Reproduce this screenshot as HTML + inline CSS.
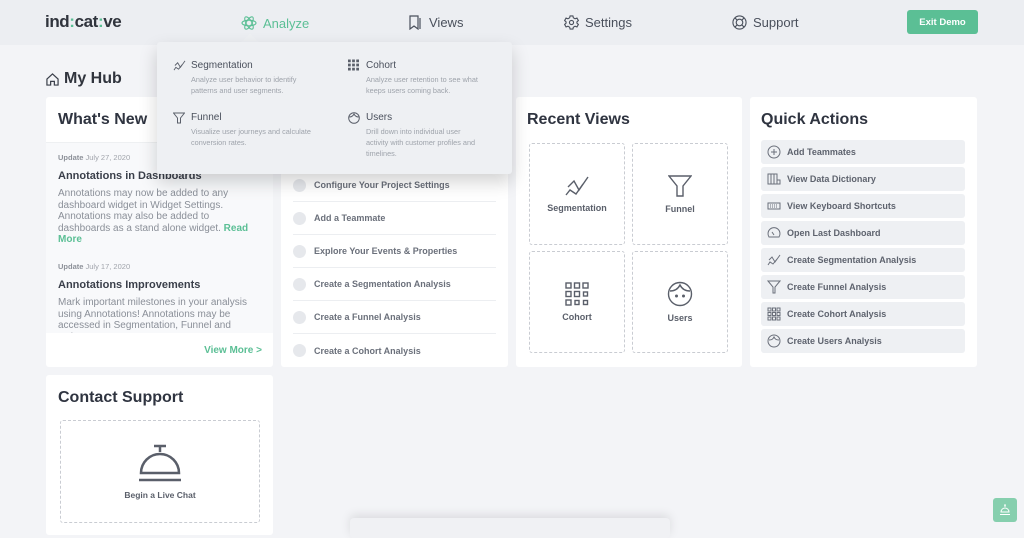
<!DOCTYPE html>
<html><head><meta charset="utf-8"><style>
*{box-sizing:border-box;margin:0;padding:0}
body{width:1024px;height:527px;overflow:hidden;background:#f3f4f7;font-family:"Liberation Sans",sans-serif;color:#3a3f4a;position:relative}
.hdr{position:absolute;left:0;top:0;width:1024px;height:45px;background:#eceef2}
.abs{position:absolute}
.nav{position:absolute;top:15px;font-size:13px;color:#4a505c;display:flex;align-items:center;gap:6px}
.card{position:absolute;background:#fff;border-radius:3px}
h2{font-size:16px;font-weight:bold;color:#2f3440}
.mid-item{position:absolute;left:12px;width:203px;height:33px;border-bottom:1px solid #eceef1;font-size:9px;font-weight:bold;color:#6b707b;display:flex;align-items:center;gap:8px}
.chk{width:13px;height:13px;border-radius:50%;background:#e6e8ec}
.tile{position:absolute;width:96px;height:102px;border:1px dashed #c9ccd2;border-radius:3px;display:flex;flex-direction:column;align-items:center;justify-content:center;font-size:9px;color:#5a5f6a;font-weight:bold;gap:6px}
.qa{position:absolute;left:11px;width:204px;height:24px;background:#eef0f3;border-radius:3px;font-size:9px;font-weight:bold;color:#5e636e;display:flex;align-items:center;padding-left:6px;gap:6px}
.qa svg{width:14px;height:14px}
.dd{position:absolute;left:157px;top:42px;width:355px;height:132px;background:#eef0f3;border-radius:3px;box-shadow:0 8px 18px rgba(0,0,0,.18)}
.dd .t{position:absolute;font-size:10px;color:#4a505c}
.dd .d{position:absolute;font-size:7.3px;color:#9ea3ab;line-height:11px}
</style></head><body>
<div class="hdr"></div>
<div class="abs" style="left:45px;top:12px;font-size:17px;font-weight:bold;color:#30343d;letter-spacing:-.4px">ind<span style="color:#5bbf95">:</span>cat<span style="color:#5bbf95">:</span>ve</div>
<div class="nav" style="left:241px;color:#5bbf95"><svg width="16" height="16" viewBox="0 0 16 16" fill="none" stroke="#5bbf95" stroke-width="1.1"><ellipse cx="8" cy="8" rx="7" ry="2.8"/><ellipse cx="8" cy="8" rx="7" ry="2.8" transform="rotate(60 8 8)"/><ellipse cx="8" cy="8" rx="7" ry="2.8" transform="rotate(-60 8 8)"/></svg>Analyze</div>
<div class="nav" style="left:409px"><svg width="14" height="15" viewBox="0 0 14 15" fill="none" stroke="#4a505c" stroke-width="1.2"><path d="M1 1h8v13l-4-3-4 3z"/><path d="M4 1V0.5M11 3v11"/></svg>Views</div>
<div class="nav" style="left:564px"><svg width="15" height="15" viewBox="0 0 16 16" fill="none" stroke="#4a505c" stroke-width="1.2"><circle cx="8" cy="8" r="2.2"/><path d="M6.5 1h3l.5 2 1.8 1 2-.7 1.5 2.6-1.5 1.4v1.4l1.5 1.4-1.5 2.6-2-.7-1.8 1-.5 2h-3l-.5-2-1.8-1-2 .7-1.5-2.6 1.5-1.4V7.3L.7 5.9l1.5-2.6 2 .7 1.8-1z"/></svg>Settings</div>
<div class="nav" style="left:732px"><svg width="15" height="15" viewBox="0 0 16 16" fill="none" stroke="#4a505c" stroke-width="1.2"><circle cx="8" cy="8" r="7"/><circle cx="8" cy="8" r="3.5"/><path d="M3 3l2.5 2.5M13 3l-2.5 2.5M3 13l2.5-2.5M13 13l-2.5-2.5"/></svg>Support</div>
<div class="abs" style="left:907px;top:10px;width:71px;height:24px;background:#5bbf95;border-radius:3px;color:#fff;font-size:9.5px;font-weight:bold;display:flex;align-items:center;justify-content:center">Exit Demo</div>

<div class="abs" style="left:46px;top:70px;display:flex;align-items:center;gap:5px"><svg width="13" height="13" viewBox="0 0 14 14" fill="none" stroke="#3a3f4a" stroke-width="1.3"><path d="M1 6.5L7 1l6 5.5V13H9V9H5v4H1z"/></svg><span style="font-size:16px;font-weight:bold;color:#30343d">My Hub</span></div>

<div class="card" style="left:46px;top:97px;width:227px;height:270px;overflow:hidden">
<h2 style="position:absolute;left:12px;top:14px">What's New</h2>
<div style="position:absolute;left:0;top:45px;width:227px;height:191px;background:#f8f9fb;border-top:1px solid #eef0f2"></div>
<div style="position:absolute;left:12px;top:56px;font-size:7.5px;color:#a0a4ab"><b style="color:#8d9199">Update</b> July 27, 2020</div>
<div style="position:absolute;left:12px;top:73px;font-size:11px;font-weight:bold;color:#3a3f4a">Annotations in Dashboards</div>
<div style="position:absolute;left:12px;top:91px;width:205px;font-size:10px;line-height:11.5px;color:#8a8f98">Annotations may now be added to any dashboard widget in Widget Settings. Annotations may also be added to dashboards as a stand alone widget. <b style="color:#5bbf95">Read More</b></div>
<div style="position:absolute;left:12px;top:165px;font-size:7.5px;color:#a0a4ab"><b style="color:#8d9199">Update</b> July 17, 2020</div>
<div style="position:absolute;left:12px;top:182px;font-size:11px;font-weight:bold;color:#3a3f4a">Annotations Improvements</div>
<div style="position:absolute;left:12px;top:200px;width:205px;height:36px;overflow:hidden;font-size:10px;line-height:11.5px;color:#8a8f98">Mark important milestones in your analysis using Annotations! Annotations may be accessed in Segmentation, Funnel and Cohort.</div>
<div style="position:absolute;right:11px;top:248px;font-size:10px;font-weight:bold;color:#5bbf95">View More &gt;</div>
</div>

<div class="card" style="left:281px;top:97px;width:227px;height:270px">
<div class="mid-item" style="top:72px"><span class="chk"></span>Configure Your Project Settings</div>
<div class="mid-item" style="top:105px"><span class="chk"></span>Add a Teammate</div>
<div class="mid-item" style="top:138px"><span class="chk"></span>Explore Your Events &amp; Properties</div>
<div class="mid-item" style="top:171px"><span class="chk"></span>Create a Segmentation Analysis</div>
<div class="mid-item" style="top:204px"><span class="chk"></span>Create a Funnel Analysis</div>
<div class="mid-item" style="top:237px;border:none"><span class="chk"></span>Create a Cohort Analysis</div>
</div>

<div class="card" style="left:516px;top:97px;width:226px;height:270px">
<h2 style="position:absolute;left:11px;top:14px">Recent Views</h2>
<div class="tile" style="left:13px;top:46px"><svg width="26" height="22" viewBox="0 0 26 22" fill="none" stroke="#5a5f6a" stroke-width="1.4"><path d="M4 12l6-6 5 9 9-13M2 20l4-5 6 4 7-10"/></svg>Segmentation</div>
<div class="tile" style="left:116px;top:46px"><svg width="24" height="24" viewBox="0 0 24 24" fill="none" stroke="#5a5f6a" stroke-width="1.4"><path d="M1 2h22l-8 10v10h-6V12z"/></svg>Funnel</div>
<div class="tile" style="left:13px;top:154px"><svg width="24" height="24" viewBox="0 0 24 24" fill="none" stroke="#5a5f6a" stroke-width="1.4"><rect x="1" y="1" width="5" height="5"/><rect x="9.5" y="1" width="5" height="5"/><rect x="18" y="1" width="5" height="5"/><rect x="1" y="9.5" width="5" height="5"/><rect x="9.5" y="9.5" width="5" height="5"/><rect x="18.5" y="10" width="4" height="4"/><rect x="1" y="18" width="5" height="5"/><rect x="10" y="18.5" width="4" height="4"/><rect x="18.5" y="18.5" width="4" height="4"/></svg>Cohort</div>
<div class="tile" style="left:116px;top:154px"><svg width="26" height="26" viewBox="0 0 26 26" fill="none" stroke="#5a5f6a" stroke-width="1.4"><circle cx="13" cy="13" r="11.5"/><path d="M3 10c5 0 8-2 10-6 2 4 5 6 10 6"/><circle cx="9.5" cy="15" r=".8" fill="#5a5f6a"/><circle cx="16.5" cy="15" r=".8" fill="#5a5f6a"/></svg>Users</div>
</div>

<div class="card" style="left:750px;top:97px;width:227px;height:270px">
<h2 style="position:absolute;left:11px;top:14px">Quick Actions</h2>
<div class="qa" style="top:43px"><svg viewBox="0 0 14 14" fill="none" stroke="#6b707b"><circle cx="7" cy="7" r="6"/><path d="M7 4v6M4 7h6"/></svg>Add Teammates</div>
<div class="qa" style="top:70px"><svg viewBox="0 0 14 14" fill="none" stroke="#6b707b"><path d="M1 2h9v10H1zM4 2v10M7 2v10M10 8h3v4h-3"/></svg>View Data Dictionary</div>
<div class="qa" style="top:97px"><svg viewBox="0 0 14 14" fill="none" stroke="#6b707b"><rect x="1" y="4" width="12" height="6"/><path d="M3 6h8M3 8h8" stroke-dasharray="1 1"/></svg>View Keyboard Shortcuts</div>
<div class="qa" style="top:124px"><svg viewBox="0 0 14 14" fill="none" stroke="#6b707b"><path d="M2 11a6 6 0 1 1 10 0z"/><path d="M5 6l2 3"/></svg>Open Last Dashboard</div>
<div class="qa" style="top:151px"><svg viewBox="0 0 14 14" fill="none" stroke="#6b707b"><path d="M2 7l3-3 3 5 5-7M1 12l2-3 3 2 4-5"/></svg>Create Segmentation Analysis</div>
<div class="qa" style="top:178px"><svg viewBox="0 0 14 14" fill="none" stroke="#6b707b"><path d="M1 1h12l-5 6v6H6V7z"/></svg>Create Funnel Analysis</div>
<div class="qa" style="top:205px"><svg viewBox="0 0 14 14" fill="none" stroke="#6b707b"><path d="M1 1h3v3H1zM5.5 1h3v3h-3zM10 1h3v3h-3zM1 5.5h3v3H1zM5.5 5.5h3v3h-3zM10 5.5h3v3h-3zM1 10h3v3H1zM5.5 10h3v3h-3zM10 10h3v3h-3z"/></svg>Create Cohort Analysis</div>
<div class="qa" style="top:232px"><svg viewBox="0 0 14 14" fill="none" stroke="#6b707b"><circle cx="7" cy="7" r="6"/><path d="M2 6c3 0 4-1 5-3 1 2 2 3 5 3"/></svg>Create Users Analysis</div>
</div>

<div class="card" style="left:46px;top:375px;width:227px;height:160px">
<h2 style="position:absolute;left:12px;top:14px">Contact Support</h2>
<div style="position:absolute;left:14px;top:45px;width:200px;height:103px;border:1px dashed #c9ccd2;border-radius:3px;display:flex;flex-direction:column;align-items:center;justify-content:center;gap:8px;font-size:8.5px;font-weight:bold;color:#5a5f6a"><svg width="44" height="38" viewBox="0 0 44 38" fill="none" stroke="#5a5f6a" stroke-width="2.5"><path d="M16 2h12M22 2v6"/><path d="M3 29a19 19 0 0 1 38 0z"/><path d="M1 36h42"/></svg>Begin a Live Chat</div>
</div>

<div class="abs" style="left:350px;top:518px;width:320px;height:20px;background:#f0f1f4;box-shadow:0 -3px 10px rgba(0,0,0,.1);border-radius:4px"></div>
<div class="abs" style="left:993px;top:498px;width:24px;height:24px;background:#86cfae;border-radius:3px;display:flex;align-items:center;justify-content:center"><svg width="12" height="12" viewBox="0 0 12 12" fill="none" stroke="#fff"><path d="M5 1h2M6 1v2M2 8a4 4 0 0 1 8 0zM1 10.5h10"/></svg></div>

<div class="abs" style="left:244px;top:36px;width:12px;height:12px;background:#eef0f3;transform:rotate(45deg)"></div>
<div class="dd">
<svg class="abs" style="left:16px;top:18px" width="13" height="11" viewBox="0 0 14 12" fill="none" stroke="#5a5f6a"><path d="M2 6l3-3 3 5 5-7M1 11l2-3 3 2 4-5"/></svg>
<div class="t" style="left:34px;top:18px">Segmentation</div>
<div class="d" style="left:34px;top:32px">Analyze user behavior to identify<br>patterns and user segments.</div>
<svg class="abs" style="left:191px;top:17px" width="11" height="12" viewBox="0 0 12 12" fill="#5a5f6a"><path d="M0 0h3v3H0zM4.5 0h3v3h-3zM9 0h3v3H9zM0 4.5h3v3H0zM4.5 4.5h3v3h-3zM9 4.5h3v3H9zM0 9h3v3H0zM4.5 9h3v3h-3zM9 9h3v3H9z"/></svg>
<div class="t" style="left:209px;top:18px">Cohort</div>
<div class="d" style="left:209px;top:32px">Analyze user retention to see what<br>keeps users coming back.</div>
<svg class="abs" style="left:16px;top:70px" width="12" height="12" viewBox="0 0 12 12" fill="none" stroke="#5a5f6a"><path d="M.5 1h11l-4 5v5h-3V6z"/></svg>
<div class="t" style="left:34px;top:70px">Funnel</div>
<div class="d" style="left:34px;top:84px">Visualize user journeys and calculate<br>conversion rates.</div>
<svg class="abs" style="left:191px;top:70px" width="12" height="12" viewBox="0 0 12 12" fill="none" stroke="#5a5f6a"><circle cx="6" cy="6" r="5.3"/><path d="M1.5 5c2.5 0 3.5-1 4.5-3 1 2 2 3 4.5 3"/></svg>
<div class="t" style="left:209px;top:70px">Users</div>
<div class="d" style="left:209px;top:84px">Drill down into individual user<br>activity with customer profiles and<br>timelines.</div>
</div>
</body></html>
